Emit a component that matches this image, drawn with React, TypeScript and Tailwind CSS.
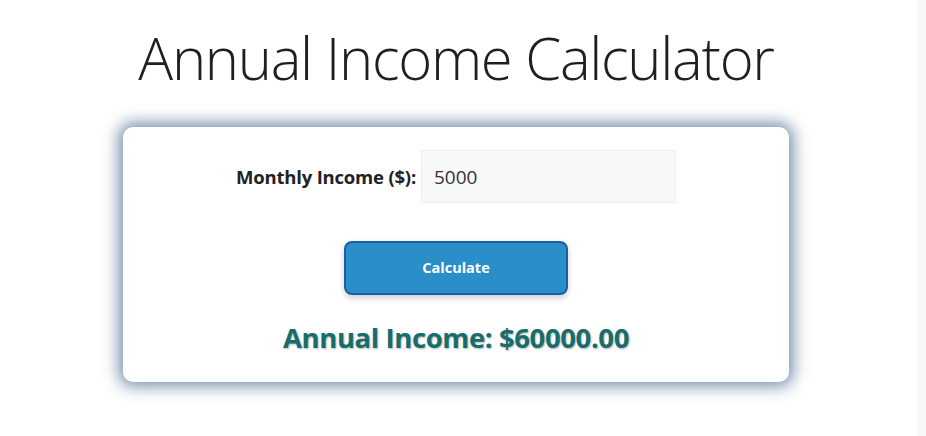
import { useState } from "react";

export default function App() {
    const [monthly, setMonthly] = useState("5000");
    const [annual, setAnnual] = useState<number | null>(60000);

    return (
        <div className="flex h-[436px] w-full bg-white font-['Open_Sans',sans-serif] text-[#222]">
            <div className="flex flex-1 flex-col items-center pr-[5px]">
                <h1 className="mt-[20px] text-[58px] font-light leading-[76px] tracking-[-1.3px] text-[#1f1f1f]">
                    Annual Income Calculator
                </h1>
                <div className="mt-[31px] flex w-[666px] flex-col items-center rounded-[10px] bg-white pb-[25px] pt-[23px] shadow-[0_0_16px_4px_rgba(50,85,130,0.68)]">
                    <div className="flex items-center gap-[5px]">
                        <label
                            htmlFor="monthly"
                            className="text-[18.5px] font-bold tracking-[-0.2px] text-[#222]"
                        >
                            Monthly Income ($):
                        </label>
                        <input
                            id="monthly"
                            type="text"
                            value={monthly}
                            onChange={(e) => setMonthly(e.target.value)}
                            className="h-[53px] w-[255px] border border-[#eceef0] bg-[#f7f8fa] px-[12px] text-[19px] text-[#333] outline-none"
                        />
                    </div>
                    <button
                        type="button"
                        onClick={() => setAnnual((parseFloat(monthly) || 0) * 12)}
                        className="mt-[38px] h-[54px] w-[224px] rounded-[8px] border-2 border-[#1c5ea6] bg-[#2a8ec8] text-[14.5px] font-bold text-white shadow-[0_3px_6px_rgba(0,0,0,0.2)]"
                    >
                        Calculate
                    </button>
                    {annual !== null && (
                        <p className="mt-[24px] text-[27.5px] font-bold leading-[38px] tracking-[-0.4px] text-[#176d6b] [text-shadow:1px_1px_2px_rgba(0,0,0,0.3)]">
                            Annual Income: ${annual.toFixed(2)}
                        </p>
                    )}
                </div>
            </div>
            <div className="w-[9px] bg-[#f7f7f7]" />
        </div>
    );
}
